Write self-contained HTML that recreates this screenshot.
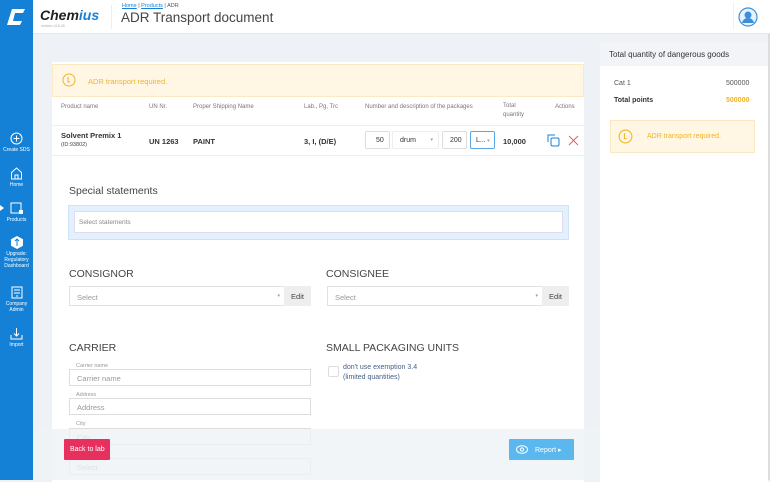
<!DOCTYPE html>
<html><head><meta charset="utf-8"><style>
*{box-sizing:border-box;margin:0;padding:0}
body{width:770px;height:480px;overflow:hidden;background:#eef2f6;font-family:"Liberation Sans",sans-serif;position:relative;color:#333}
.sb{position:absolute;left:0;top:0;width:33px;height:480px;background:#1581d6}
.sbi{position:absolute;left:0;width:33px;text-align:center;color:#fff;font-size:5px;line-height:6px}
.hdr{position:absolute;left:33px;top:0;right:0;height:34px;background:#fff;border-bottom:1px solid #e4e8ee}
.abs{position:absolute}
.card{position:absolute;left:52px;top:62px;width:532px;height:420px;background:#fff}
.alert{background:#fff6e3;border:1px solid #fbe9c4;color:#f0b429;font-size:7.5px}
.th{position:absolute;top:104px;font-size:6px;color:#777}
.td{position:absolute;font-size:7.5px;font-weight:bold;color:#333}
.inp{position:absolute;border:1px solid #ddd;background:#fff;font-size:7px;color:#333;border-radius:2px}
.lbl{position:absolute;font-size:10.5px;color:#444}
.sel{position:absolute;height:20px;border:1px solid #e2e2e2;background:#fff;font-size:7.5px;color:#999;padding:6px 7px}
.edit{position:absolute;height:20px;width:27px;background:#eee;font-size:7.5px;color:#444;text-align:center;padding-top:6px}
.fi{position:absolute;left:69px;width:242px;height:17px;border:1px solid #ddd;font-size:7.5px;color:#999;padding:4px 7px}
.fl{position:absolute;left:74px;font-size:5.5px;color:#999;background:#fff;padding:0 2px}
</style></head><body>
<div class="sb">
 <svg class="abs" style="left:6px;top:8px" width="20" height="18" viewBox="0 0 20 18"><path d="M6 1h13l-2 4H9L7 13h9l-2 4H1z" fill="#fff"/></svg>
 <div class="sbi" style="top:132px"><svg width="13" height="13" viewBox="0 0 13 13"><circle cx="6.5" cy="6.5" r="5.5" fill="none" stroke="#fff"/><path d="M6.5 3.5v6M3.5 6.5h6" stroke="#fff"/></svg><br>Create SDS</div>
 <div class="sbi" style="top:167px"><svg width="13" height="13" viewBox="0 0 13 13"><path d="M1.5 12V5.5L6.5 1l5 4.5V12zM5 12V8h3v4" fill="none" stroke="#fff"/></svg><br>Home</div>
 <div class="sbi" style="top:201px"><svg width="14" height="14" viewBox="0 0 14 14"><rect x="1" y="2" width="10" height="10" fill="none" stroke="#fff"/><rect x="9" y="9" width="4" height="4" fill="#fff"/></svg><br>Products</div>
 <div class="abs" style="left:0;top:205px;width:0;height:0;border-left:4px solid #fff;border-top:3px solid transparent;border-bottom:3px solid transparent"></div>
 <div class="sbi" style="top:236px"><svg width="12" height="13" viewBox="0 0 12 13"><path d="M6 0l6 3.2v6.6L6 13 0 9.8V3.2z" fill="#fff"/><path d="M6 3v7M4 5l2-2 2 2" stroke="#1581d6" fill="none"/></svg><br>Upgrade:<br>Regulatory<br>Dashboard</div>
 <div class="sbi" style="top:286px"><svg width="12" height="13" viewBox="0 0 12 13"><rect x="1" y="1" width="10" height="11" fill="none" stroke="#fff"/><path d="M3 4h6M3 7h6M5 10h2" stroke="#fff"/></svg><br>Company<br>Admin</div>
 <div class="sbi" style="top:327px"><svg width="13" height="13" viewBox="0 0 13 13"><path d="M1 8v4h11V8M6.5 1v8M4 6.5l2.5 2.5 2.5-2.5" fill="none" stroke="#fff"/></svg><br>Import</div>
</div>
<div class="hdr">
 <div class="abs" style="left:7px;top:7px;font-size:14px;font-weight:bold;font-style:italic;color:#222">Chem<span style="color:#1581d6">ius</span></div>
 <div class="abs" style="left:8px;top:24px;font-size:3.5px;color:#aaa">version v3.8.49</div>
 <div class="abs" style="left:78px;top:5px;width:1px;height:24px;background:#eee"></div>
 <div class="abs" style="left:89px;top:3px;font-size:5.5px;color:#555"><u style="color:#1581d6">Home</u> | <u style="color:#1581d6">Products</u> | ADR</div>
 <div class="abs" style="left:88px;top:10px;font-size:13.5px;color:#444">ADR Transport document</div>
 <div class="abs" style="left:700px;top:2px;width:1px;height:28px;background:#f2f2f2"></div>
 <svg class="abs" style="left:705px;top:7px" width="20" height="20" viewBox="0 0 20 20"><circle cx="10" cy="10" r="9" fill="#e8f2fb" stroke="#3a8fdc" stroke-width="1.2"/><circle cx="10" cy="8" r="3.5" fill="#3a8fdc"/><path d="M4 16c1-3.5 3-5 6-5s5 1.5 6 5" fill="#3a8fdc"/></svg>
</div>
<div class="card"></div>
<div class="alert abs" style="left:52px;top:64px;width:532px;height:33px;padding:12px 0 0 35px">ADR transport required.</div>
<svg class="abs" style="left:62px;top:73px" width="14" height="14" viewBox="0 0 14 14"><circle cx="7" cy="7" r="6" fill="none" stroke="#f0b429"/><path d="M6 4v5h2" fill="none" stroke="#f0b429"/></svg>
<div class="th" style="left:61px">Product name</div>
<div class="th" style="left:149px">UN Nr.</div>
<div class="th" style="left:193px">Proper Shipping Name</div>
<div class="th" style="left:304px">Lab., Pg, Trc</div>
<div class="th" style="left:365px">Number and description of the packages</div>
<div class="th" style="left:503px;line-height:9px;top:102px">Total<br>quantity</div>
<div class="th" style="left:555px">Actions</div>
<div class="abs" style="left:52px;top:125px;width:532px;height:1px;background:#eee"></div>
<div class="td" style="left:61px;top:131px">Solvent Premix 1</div>
<div class="abs" style="left:61px;top:142px;font-size:5.5px;color:#444">(ID:93802)</div>
<div class="td" style="left:149px;top:137px">UN 1263</div>
<div class="td" style="left:193px;top:137px">PAINT</div>
<div class="td" style="left:304px;top:137px">3, I, (D/E)</div>
<div class="inp" style="left:365px;top:131px;width:25px;height:18px;padding:5px 0 0 10px">50</div>
<div class="inp" style="left:392px;top:131px;width:47px;height:18px;padding:5px 0 0 7px;border-color:#eee">drum<span style="position:absolute;right:5px;font-size:5px;color:#999">▾</span></div>
<div class="inp" style="left:442px;top:131px;width:25px;height:18px;padding:5px 0 0 7px">200</div>
<div class="inp" style="left:470px;top:131px;width:25px;height:18px;padding:5px 0 0 5px;border-color:#5aa7e8">L...<span style="font-size:5px;color:#999"> ▾</span></div>
<div class="td" style="left:503px;top:137px">10,000</div>
<svg class="abs" style="left:547px;top:134px" width="13" height="13" viewBox="0 0 13 13"><path d="M1 8V1h7" fill="none" stroke="#1581d6"/><rect x="4" y="4" width="8" height="8" rx="1.5" fill="none" stroke="#1581d6"/></svg>
<svg class="abs" style="left:568px;top:135px" width="11" height="11" viewBox="0 0 11 11"><path d="M1 1l9 9M10 1l-9 9" stroke="#e85a6b"/></svg>
<div class="abs" style="left:52px;top:155px;width:532px;height:1px;background:#eee"></div>
<div class="lbl" style="left:69px;top:185px">Special statements</div>
<div class="abs" style="left:68px;top:205px;width:501px;height:35px;background:#e3f0fd;border:1px solid #cfe3f8"></div>
<div class="abs" style="left:74px;top:211px;width:489px;height:22px;background:#fff;border:1px solid #dde;font-size:6.5px;color:#888;padding:7px 4px">Select statements</div>
<div class="lbl" style="left:69px;top:268px">CONSIGNOR</div>
<div class="lbl" style="left:326px;top:268px">CONSIGNEE</div>
<div class="sel" style="left:69px;top:286px;width:216px">Select<span style="position:absolute;right:4px;font-size:5px">▾</span></div>
<div class="edit" style="left:284px;top:286px">Edit</div>
<div class="sel" style="left:327px;top:286px;width:216px">Select<span style="position:absolute;right:4px;font-size:5px">▾</span></div>
<div class="edit" style="left:542px;top:286px">Edit</div>
<div class="lbl" style="left:69px;top:342px">CARRIER</div>
<div class="lbl" style="left:326px;top:342px">SMALL PACKAGING UNITS</div>
<div class="fi" style="top:369px">Carrier name</div><div class="fl" style="top:363px">Carrier name</div>
<div class="fi" style="top:398px">Address</div><div class="fl" style="top:392px">Address</div>
<div class="fi" style="top:428px">City</div><div class="fl" style="top:421px">City</div>
<div class="fi" style="top:458px">Select</div>
<div class="abs" style="left:328px;top:366px;width:11px;height:11px;border:1px solid #ddd;border-radius:2px"></div>
<div class="abs" style="left:343px;top:363px;font-size:7px;color:#44618a;line-height:10px">don't use exemption 3.4<br>(limited quantities)</div>
<div class="abs" style="left:33px;top:429px;width:567px;height:51px;background:rgba(238,242,246,0.8)"></div>
<div class="abs" style="left:64px;top:439px;width:46px;height:21px;background:#e8305f;color:#fff;font-size:7px;padding:7px 0 0 6px;border-radius:1px">Back to lab</div>
<div class="abs" style="left:509px;top:439px;width:65px;height:21px;background:#5ab8ef;color:#fff;font-size:7px;padding:7px 0 0 26px;border-radius:1px">Report ▸</div>
<svg class="abs" style="left:516px;top:445px" width="12" height="9" viewBox="0 0 12 9"><ellipse cx="6" cy="4.5" rx="5.5" ry="3.8" fill="none" stroke="#fff"/><circle cx="6" cy="4.5" r="1.6" fill="none" stroke="#fff"/></svg>
<div class="abs" style="left:600px;top:42px;width:168px;height:440px;background:#fff"></div>
<div class="abs" style="left:600px;top:42px;width:168px;height:24px;background:#f2f4f7;font-size:8px;color:#333;padding:8px 0 0 9px">Total quantity of dangerous goods</div>
<div class="abs" style="left:614px;top:80px;font-size:7px;color:#555">Cat 1</div>
<div class="abs" style="left:726px;top:80px;font-size:7px;color:#555">500000</div>
<div class="abs" style="left:614px;top:97px;font-size:7px;font-weight:bold;color:#333">Total points</div>
<div class="abs" style="left:726px;top:97px;font-size:7px;font-weight:bold;color:#f0b429">500000</div>
<div class="alert abs" style="left:610px;top:120px;width:145px;height:33px;padding:12px 0 0 36px;font-size:7px">ADR transport required.</div>
<svg class="abs" style="left:618px;top:129px" width="15" height="15" viewBox="0 0 14 14"><circle cx="7" cy="7" r="6" fill="none" stroke="#f0b429"/><path d="M6 4v5h2" fill="none" stroke="#f0b429"/></svg>
<div class="abs" style="left:768px;top:34px;width:2px;height:446px;background:#ddd"></div>
</body></html>
